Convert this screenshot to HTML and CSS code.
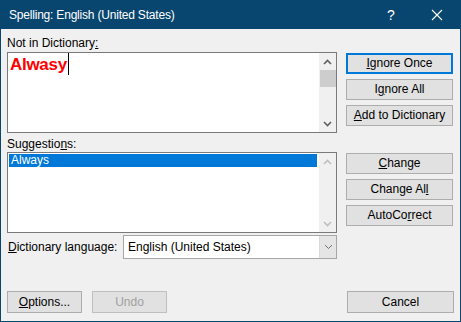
FILE: index.html
```html
<!DOCTYPE html>
<html>
<head>
	<meta charset="utf-8">
	<title>Spelling</title>
	<link rel="stylesheet" href="styles.css">
</head>
<body>

<div class="window">
	<div class="titlebar">
		<span class="title">Spelling: English (United States)</span>
		<span class="caption-btn help">?</span>
		<span class="caption-btn">
			<svg width="12" height="12" viewBox="0 0 12 12"><path d="M1 1 L11 11 M11 1 L1 11" stroke="#fff" stroke-width="1.1" fill="none"/></svg>
		</span>
	</div>
	<div class="content">
		<div class="main">
			<div class="left">
				<div class="label">Not in Dictionary<u>:</u></div>
				<div class="textbox">
					<div class="text-area">
						<span class="bad-word">Alwasy</span><span class="caret"></span>
					</div>
					<div class="scrollbar">
						<div class="arrow"><svg width="9" height="6" viewBox="0 0 9 6"><path d="M1 5 L4.5 1.5 L8 5" stroke="#606060" stroke-width="1.6" fill="none"/></svg></div>
						<div class="thumb"></div>
						<div class="track"></div>
						<div class="arrow"><svg width="9" height="6" viewBox="0 0 9 6"><path d="M1 1 L4.5 4.5 L8 1" stroke="#606060" stroke-width="1.6" fill="none"/></svg></div>
					</div>
				</div>
				<div class="label label-gap">Suggestio<u>n</u>s:</div>
				<div class="textbox">
					<div class="list-items">
						<div class="list-item selected">Always</div>
					</div>
					<div class="scrollbar">
						<div class="arrow"><svg width="9" height="6" viewBox="0 0 9 6"><path d="M1 5 L4.5 1.5 L8 5" stroke="#bfbfbf" stroke-width="1.6" fill="none"/></svg></div>
						<div class="track"></div>
						<div class="arrow"><svg width="9" height="6" viewBox="0 0 9 6"><path d="M1 1 L4.5 4.5 L8 1" stroke="#bfbfbf" stroke-width="1.6" fill="none"/></svg></div>
					</div>
				</div>
				<div class="lang-row">
					<span><u>D</u>ictionary language:</span>
					<div class="combo">
						<span class="combo-text">English (United States)</span>
						<span class="combo-btn"><svg width="9" height="6" viewBox="0 0 9 6"><path d="M1 1 L4.5 4.5 L8 1" stroke="#707070" stroke-width="1" fill="none"/></svg></span>
					</div>
				</div>
			</div>
			<div class="right">
				<div class="button default"><u>I</u>gnore Once</div>
				<div class="button">I<u>g</u>nore All</div>
				<div class="button"><u>A</u>dd to Dictionary</div>
				<div class="button group-start"><u>C</u>hange</div>
				<div class="button">Change Al<u>l</u></div>
				<div class="button">AutoCo<u>r</u>rect</div>
			</div>
		</div>
		<div class="bottom">
			<div class="button small"><u>O</u>ptions...</div>
			<div class="button small disabled">Undo</div>
			<div class="button cancel">Cancel</div>
		</div>
	</div>
</div>

</body>
</html>
```

FILE: styles.css
```css
* {
	box-sizing: border-box;
}

body {
	margin: 0;
	font-family: "Liberation Sans", Arial, sans-serif;
	font-size: 12px;
	color: #000;
}

.window {
	width: 461px;
	height: 322px;
	border: 1px solid #08466f;
	border-top: none;
	background-color: #f0f0f0;
	display: flex;
	flex-direction: column;
}

.titlebar {
	height: 29px;
	flex: none;
	background-color: #08466f;
	color: #fff;
	display: flex;
	align-items: center;
	padding-left: 8px;
}

.title {
	flex: 1;
	letter-spacing: -0.2px;
}

.caption-btn {
	width: 46px;
	height: 29px;
	display: flex;
	align-items: center;
	justify-content: center;
}

.help {
	font-size: 14px;
}

.content {
	flex: 1;
	display: flex;
	flex-direction: column;
	padding: 6px 6px 8px 6px;
}

.main {
	display: flex;
	gap: 9px;
}

.left {
	width: 330px;
}

.label {
	height: 16px;
	line-height: 16px;
	margin-bottom: 1px;
}

.label-gap {
	margin-top: 3px;
	margin-bottom: 0;
}

.textbox {
	height: 81px;
	border: 1px solid #7a7a7a;
	background-color: #fff;
	display: flex;
}

.text-area {
	flex: 1;
	display: flex;
	align-items: flex-start;
	padding-left: 2px;
}

.bad-word {
	font-size: 17px;
	font-weight: bold;
	letter-spacing: -0.3px;
	color: #ff0000;
	line-height: 22px;
	padding-top: 1px;
}

.caret {
	width: 1px;
	height: 22px;
	margin-left: 1px;
	background-color: #000;
}

.scrollbar {
	width: 17px;
	background-color: #f0f0f0;
	display: flex;
	flex-direction: column;
}

.arrow {
	height: 17px;
	display: flex;
	align-items: center;
	justify-content: center;
}

.thumb {
	height: 17px;
	margin-left: 1px;
	background-color: #cdcdcd;
}

.track {
	flex: 1;
}

.list-items {
	flex: 1;
	padding: 1px 2px 1px 1px;
}

.list-item {
	height: 13px;
	line-height: 13px;
	padding-left: 2px;
}

.list-item.selected {
	background-color: #0078d7;
	color: #fff;
}

.lang-row {
	margin-top: 2px;
	display: flex;
	align-items: center;
	justify-content: space-between;
	padding-left: 1px;
}

.combo {
	width: 214px;
	height: 24px;
	border: 1px solid #a6a6a6;
	background-color: #fff;
	display: flex;
}

.combo-text {
	flex: 1;
	line-height: 22px;
	padding-left: 4px;
}

.combo-btn {
	width: 17px;
	background-color: #e5e5e5;
	border-left: 1px solid #d9d9d9;
	display: flex;
	align-items: center;
	justify-content: center;
}

.right {
	width: 107px;
	padding-top: 18px;
	display: flex;
	flex-direction: column;
	gap: 5px;
}

.button {
	height: 21px;
	border: 1px solid #adadad;
	background-color: #e1e1e1;
	text-align: center;
	line-height: 19px;
}

.button.default {
	border: 2px solid #0078d7;
	line-height: 17px;
}

.button.group-start {
	margin-top: 22px;
}

.bottom {
	margin-top: auto;
	display: flex;
	gap: 10px;
}

.bottom .button {
	height: 22px;
	line-height: 20px;
}

.button.small {
	width: 75px;
}

.button.disabled {
	color: #a0a0a0;
	border-color: #bfbfbf;
}

.button.cancel {
	width: 107px;
	margin-left: auto;
}
```
